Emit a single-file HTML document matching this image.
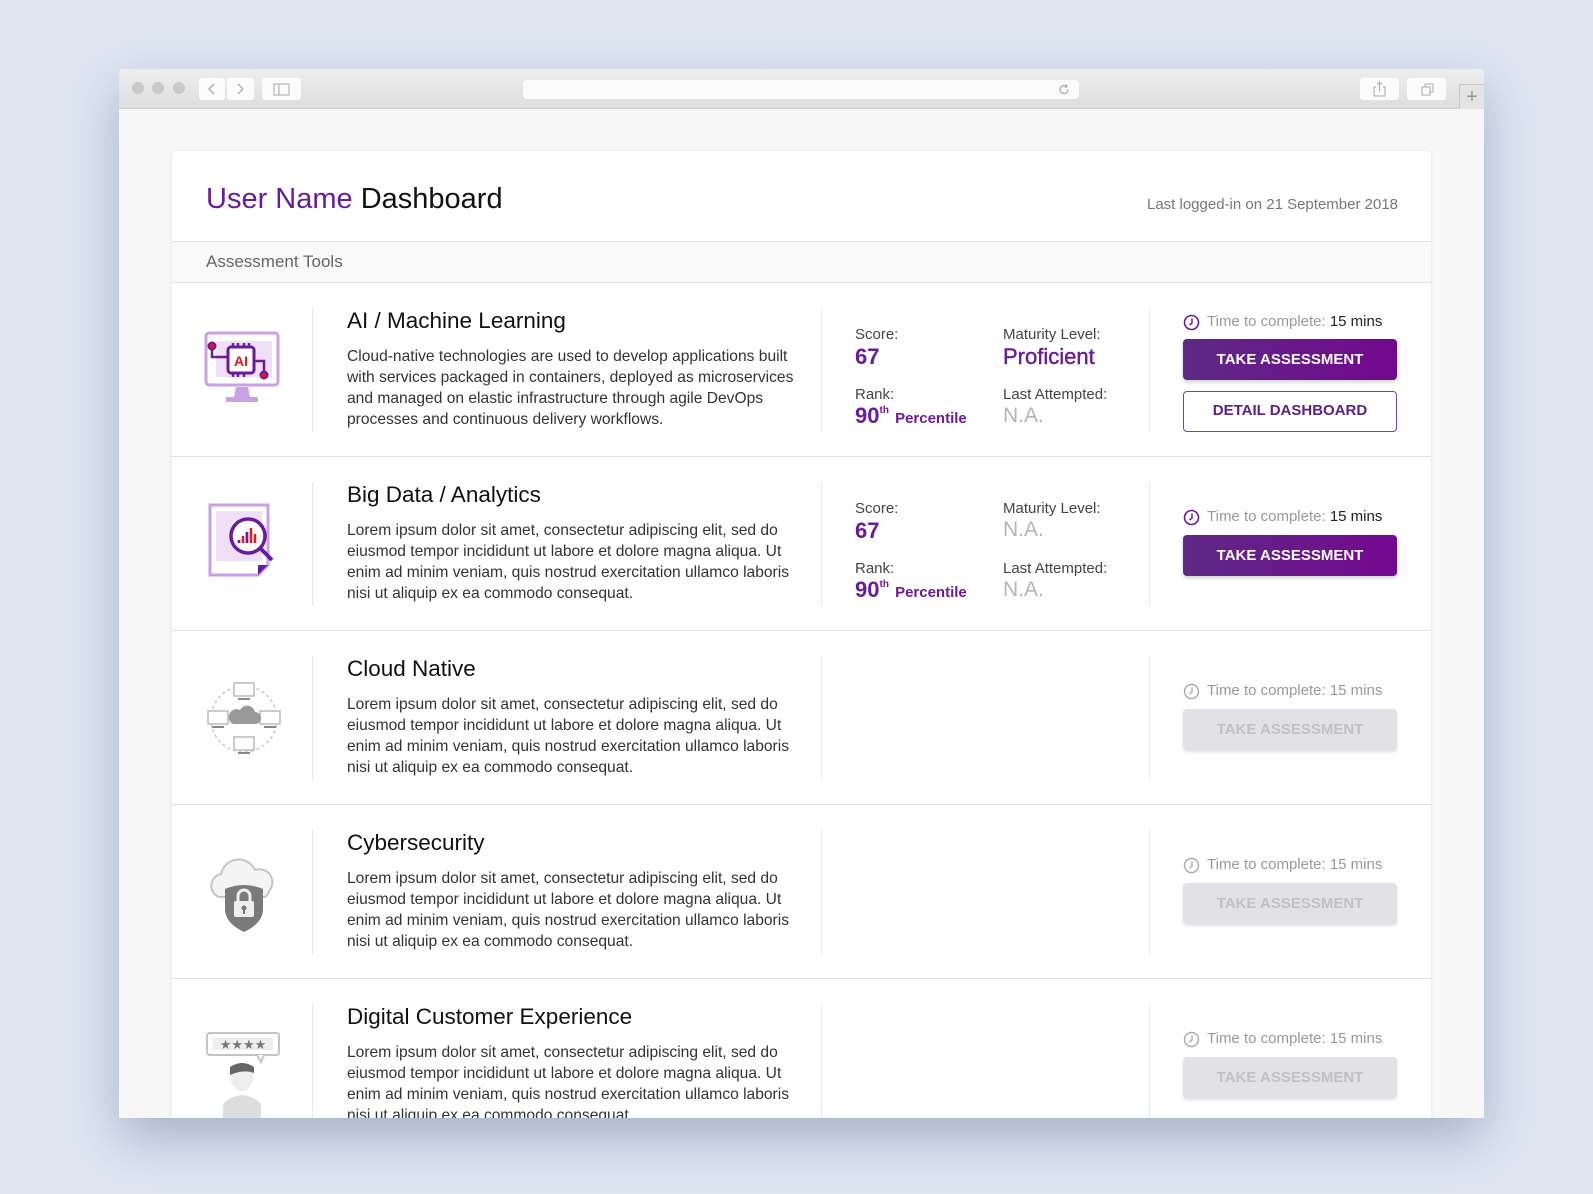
<!DOCTYPE html>
<html><head><meta charset="utf-8"><style>
*{margin:0;padding:0;box-sizing:border-box}
body{width:1593px;height:1194px;background:#dfe6f2;position:relative;overflow:hidden;font-family:"Liberation Sans",sans-serif}
.a{position:absolute}
.win{left:119px;top:69px;width:1365px;height:1049px;background:#f7f7f7;box-shadow:0 20px 50px rgba(60,80,120,.35);overflow:hidden;border-radius:4px 4px 0 0}
.tb{left:0;top:0;width:1365px;height:40px;background:linear-gradient(#eeeeee,#dedede);border-bottom:1px solid #cfcfcf}
.dot{width:12px;height:12px;border-radius:6px;background:#c9c9c9;top:13px}
.bb{background:#fbfbfb;border-radius:3px;height:22px;top:9px}
.card{left:53px;top:82px;width:1259px;height:1100px;background:#fff;border-radius:5px;box-shadow:0 1px 4px rgba(0,0,0,.08)}
.hl{left:0;width:1259px;height:1px;background:#e3e3e6}
.vl{width:1px;height:124px;background:#e6e6e6}
.t{font-size:22.5px;color:#111;white-space:nowrap}
.d{font-size:15.6px;line-height:21px;color:#333;white-space:nowrap}
.lab{font-size:15px;color:#444;white-space:nowrap}
.val{font-size:22px;color:#6a1b9a;white-space:nowrap;font-weight:bold}
.na{font-size:21px;color:#b5b5b8;white-space:nowrap}
.tm{font-size:15px;color:#999;white-space:nowrap}
.tm b{font-weight:normal;color:#222}
.btn{width:214px;height:41px;border-radius:4px;font-size:15px;font-weight:bold;text-align:center;line-height:41px;white-space:nowrap}
.p{background:linear-gradient(90deg,#5e2a86,#73078e);color:#fff;box-shadow:0 2px 4px rgba(0,0,0,.2)}
.o{border:1.5px solid #7b3fa0;color:#5b1f85;line-height:38px}
.g{background:#e2e2e6;color:#c0c0c6;box-shadow:0 2px 3px rgba(0,0,0,.12)}
</style></head><body>
<div class="a win">
 <div class="a tb">
  <div class="a dot" style="left:13px"></div><div class="a dot" style="left:33px"></div><div class="a dot" style="left:54px"></div>
  <div class="a bb" style="left:80px;width:26px"><svg width="26" height="22"><path d="M15 6l-5 5 5 5" stroke="#aaa" fill="none" stroke-width="1.3"/></svg></div>
  <div class="a bb" style="left:108px;width:27px"><svg width="27" height="22"><path d="M11 6l5 5-5 5" stroke="#aaa" fill="none" stroke-width="1.3"/></svg></div>
  <div class="a bb" style="left:143px;width:39px"><svg width="39" height="22"><rect x="12" y="6" width="15" height="11" stroke="#aaa" fill="none"/><line x1="17" y1="6" x2="17" y2="17" stroke="#aaa"/></svg></div>
  <div class="a bb" style="left:404px;width:556px;top:11px;height:19px;border-radius:4px"><svg class="a" style="right:8px;top:3px" width="13" height="13"><path d="M10 6.5a4 4 0 1 1-1.5-3.1" stroke="#999" fill="none"/><path d="M8 1.5l1 2.2-2.3.6" stroke="#999" fill="none"/></svg></div>
  <div class="a bb" style="left:1241px;width:39px"><svg width="39" height="22"><path d="M16 9h-2v9h11v-9h-2M19.5 13V4M17 6.5l2.5-2.5 2.5 2.5" stroke="#aaa" fill="none"/></svg></div>
  <div class="a bb" style="left:1288px;width:39px"><svg width="39" height="22"><rect x="15" y="9" width="8" height="8" stroke="#aaa" fill="none"/><path d="M18 9V6h8v8h-3" stroke="#aaa" fill="none"/></svg></div>
  <div class="a" style="left:1340px;top:15px;width:25px;height:25px;border-left:1px solid #c8c8c8;border-top:1px solid #c8c8c8;background:#e4e4e4;color:#999;font-size:20px;text-align:center;line-height:24px">+</div>
 </div>
 <div class="a card">
  <div class="a" style="left:34px;top:32px;font-size:29px;white-space:nowrap;color:#111"><span style="color:#6a1b9a">User Name</span> Dashboard</div>
  <div class="a" style="right:33px;top:45px;font-size:15px;color:#777;white-space:nowrap">Last logged-in on 21 September 2018</div>
  <div class="a hl" style="top:90px"></div>
  <div class="a" style="left:0;top:91px;width:1259px;height:40px;background:#f9f9f9"></div>
  <div class="a" style="left:34px;top:101px;font-size:17px;color:#666">Assessment Tools</div>
  <div class="a hl" style="top:131px"></div>
  <div class="a hl" style="top:305px"></div>
  <div class="a hl" style="top:479px"></div>
  <div class="a hl" style="top:653px"></div>
  <div class="a hl" style="top:827px"></div>

  <!-- Row 1 -->
  <div class="a vl" style="left:140px;top:157px"></div><div class="a vl" style="left:649px;top:157px"></div><div class="a vl" style="left:977px;top:157px"></div>
  <svg class="a" style="left:32px;top:178px" width="78" height="80"><rect x="2" y="4" width="72" height="52" rx="3" fill="#fff" stroke="#c9a1e6" stroke-width="3"/><rect x="12" y="12" width="56" height="36" fill="#efe0f8"/><path d="M32 58h12l2 10h-16z" fill="#c9a1e6"/><rect x="22" y="68" width="32" height="5" fill="#c9a1e6"/><rect x="24" y="18" width="26" height="26" rx="3" fill="#fff" stroke="#6a1b9a" stroke-width="3"/><text x="37" y="37" font-size="14" font-weight="bold" fill="#e0191f" text-anchor="middle" font-family="Liberation Sans">AI</text><path d="M8 18v10h16M50 32h10v12M29 14v4M34 14v4M40 14v4M45 14v4M29 44v4M34 44v4M40 44v4" stroke="#6a1b9a" stroke-width="2.5" fill="none"/><circle cx="8" cy="17" r="3.5" fill="#e0191f" stroke="#6a1b9a" stroke-width="2"/><circle cx="60" cy="46" r="3.5" fill="#e0191f" stroke="#6a1b9a" stroke-width="2"/></svg>
  <div class="a t" style="left:175px;top:157px">AI / Machine Learning</div>
  <div class="a d" style="left:175px;top:195px">Cloud-native technologies are used to develop applications built<br>with services packaged in containers, deployed as microservices<br>and managed on elastic infrastructure through agile DevOps<br>processes and continuous delivery workflows.</div>
  <div class="a lab" style="left:683px;top:175px">Score:</div>
  <div class="a val" style="left:683px;top:193px">67</div>
  <div class="a lab" style="left:831px;top:175px">Maturity Level:</div>
  <div class="a val" style="left:831px;top:193px;font-weight:normal;-webkit-text-stroke:.4px #6a1b9a">Proficient</div>
  <div class="a lab" style="left:683px;top:235px">Rank:</div>
  <div class="a val" style="left:683px;top:252px">90<sup style="font-size:10px;vertical-align:10px">th</sup> <span style="font-size:15px">Percentile</span></div>
  <div class="a lab" style="left:831px;top:235px">Last Attempted:</div>
  <div class="a na" style="left:831px;top:253px">N.A.</div>
  <svg class="a" style="left:1011px;top:163px" width="17" height="17"><circle cx="8.5" cy="8.5" r="7" stroke="#6a1b9a" stroke-width="1.6" fill="none"/><path d="M9 4.5v4.5l-2.5 2" stroke="#6a1b9a" stroke-width="1.5" fill="none"/></svg>
  <div class="a tm" style="left:1035px;top:162px">Time to complete: <b>15 mins</b></div>
  <div class="a btn p" style="left:1011px;top:188px">TAKE ASSESSMENT</div>
  <div class="a btn o" style="left:1011px;top:240px">DETAIL DASHBOARD</div>

  <!-- Row 2 -->
  <div class="a vl" style="left:140px;top:331px"></div><div class="a vl" style="left:649px;top:331px"></div><div class="a vl" style="left:977px;top:331px"></div>
  <svg class="a" style="left:36px;top:352px" width="72" height="78"><path d="M2 2h58v60l-10 10H2z" fill="#fff" stroke="#c9a1e6" stroke-width="3"/><rect x="8" y="8" width="46" height="50" fill="#efe0f8"/><path d="M50 72l10-10h-10z" fill="#6a1b9a"/><circle cx="40" cy="33" r="17" fill="#fff" stroke="#6a1b9a" stroke-width="3.5"/><path d="M52 45l12 12" stroke="#6a1b9a" stroke-width="4"/><path d="M31 40v-3M35 40v-7M39 40v-11M43 40v-15M47 40v-9" stroke="#e0191f" stroke-width="2.5"/><path d="M31 40v-3M39 40v-11" stroke="#6a1b9a" stroke-width="2.5"/></svg>
  <div class="a t" style="left:175px;top:331px">Big Data / Analytics</div>
  <div class="a d" style="left:175px;top:369px">Lorem ipsum dolor sit amet, consectetur adipiscing elit, sed do<br>eiusmod tempor incididunt ut labore et dolore magna aliqua. Ut<br>enim ad minim veniam, quis nostrud exercitation ullamco laboris<br>nisi ut aliquip ex ea commodo consequat.</div>
  <div class="a lab" style="left:683px;top:349px">Score:</div>
  <div class="a val" style="left:683px;top:367px">67</div>
  <div class="a lab" style="left:831px;top:349px">Maturity Level:</div>
  <div class="a na" style="left:831px;top:367px">N.A.</div>
  <div class="a lab" style="left:683px;top:409px">Rank:</div>
  <div class="a val" style="left:683px;top:426px">90<sup style="font-size:10px;vertical-align:10px">th</sup> <span style="font-size:15px">Percentile</span></div>
  <div class="a lab" style="left:831px;top:409px">Last Attempted:</div>
  <div class="a na" style="left:831px;top:427px">N.A.</div>
  <svg class="a" style="left:1011px;top:358px" width="17" height="17"><circle cx="8.5" cy="8.5" r="7" stroke="#6a1b9a" stroke-width="1.6" fill="none"/><path d="M9 4.5v4.5l-2.5 2" stroke="#6a1b9a" stroke-width="1.5" fill="none"/></svg>
  <div class="a tm" style="left:1035px;top:357px">Time to complete: <b>15 mins</b></div>
  <div class="a btn p" style="left:1011px;top:384px">TAKE ASSESSMENT</div>

  <!-- Row 3 -->
  <div class="a vl" style="left:140px;top:505px"></div><div class="a vl" style="left:649px;top:505px"></div><div class="a vl" style="left:977px;top:505px"></div>
  <svg class="a" style="left:34px;top:530px" width="76" height="76"><circle cx="38" cy="38" r="33" stroke="#c8c8c8" stroke-width="1.5" stroke-dasharray="3 3" fill="none"/><g fill="#fff" stroke="#bbb" stroke-width="1.5"><rect x="28" y="2" width="20" height="13"/><rect x="2" y="30" width="20" height="13"/><rect x="54" y="30" width="20" height="13"/><rect x="28" y="56" width="20" height="13"/></g><g fill="#888"><rect x="32" y="17" width="12" height="2"/><rect x="6" y="45" width="12" height="2"/><rect x="58" y="45" width="12" height="2"/><rect x="32" y="71" width="12" height="2"/></g><path d="M27 43h22a6 6 0 0 0 0-12 8 8 0 0 0-15-2 7 7 0 0 0-7 14z" fill="#999"/></svg>
  <div class="a t" style="left:175px;top:505px">Cloud Native</div>
  <div class="a d" style="left:175px;top:543px">Lorem ipsum dolor sit amet, consectetur adipiscing elit, sed do<br>eiusmod tempor incididunt ut labore et dolore magna aliqua. Ut<br>enim ad minim veniam, quis nostrud exercitation ullamco laboris<br>nisi ut aliquip ex ea commodo consequat.</div>
  <svg class="a" style="left:1011px;top:532px" width="17" height="17"><circle cx="8.5" cy="8.5" r="7" stroke="#aaa" stroke-width="1.4" fill="none"/><path d="M9 4.5v4.5l-2.5 2" stroke="#aaa" stroke-width="1.4" fill="none"/></svg>
  <div class="a tm" style="left:1035px;top:531px">Time to complete: 15 mins</div>
  <div class="a btn g" style="left:1011px;top:558px">TAKE ASSESSMENT</div>

  <!-- Row 4 -->
  <div class="a vl" style="left:140px;top:679px"></div><div class="a vl" style="left:649px;top:679px"></div><div class="a vl" style="left:977px;top:679px"></div>
  <svg class="a" style="left:33px;top:706px" width="78" height="78"><path d="M14 40a12 12 0 0 1 2-23 18 18 0 0 1 34-4 13 13 0 0 1 14 21 10 10 0 0 1-4 6z" fill="#f4f4f4" stroke="#c4c4c4" stroke-width="2"/><path d="M20 32q19-8 38 0v20q0 14-19 23-19-9-19-23z" fill="#7a7a7a"/><rect x="29" y="44" width="20" height="16" rx="2" fill="#eee"/><path d="M33 44v-5a6 6 0 0 1 12 0v5" stroke="#eee" stroke-width="3" fill="none"/><circle cx="39" cy="51" r="2.5" fill="#777"/><rect x="38" y="52" width="2" height="5" fill="#777"/></svg>
  <div class="a t" style="left:175px;top:679px">Cybersecurity</div>
  <div class="a d" style="left:175px;top:717px">Lorem ipsum dolor sit amet, consectetur adipiscing elit, sed do<br>eiusmod tempor incididunt ut labore et dolore magna aliqua. Ut<br>enim ad minim veniam, quis nostrud exercitation ullamco laboris<br>nisi ut aliquip ex ea commodo consequat.</div>
  <svg class="a" style="left:1011px;top:706px" width="17" height="17"><circle cx="8.5" cy="8.5" r="7" stroke="#aaa" stroke-width="1.4" fill="none"/><path d="M9 4.5v4.5l-2.5 2" stroke="#aaa" stroke-width="1.4" fill="none"/></svg>
  <div class="a tm" style="left:1035px;top:705px">Time to complete: 15 mins</div>
  <div class="a btn g" style="left:1011px;top:732px">TAKE ASSESSMENT</div>

  <!-- Row 5 -->
  <div class="a vl" style="left:140px;top:853px"></div><div class="a vl" style="left:649px;top:853px"></div><div class="a vl" style="left:977px;top:853px"></div>
  <svg class="a" style="left:33px;top:880px" width="78" height="90"><rect x="2" y="2" width="72" height="22" rx="3" fill="#fff" stroke="#c4c4c4" stroke-width="2"/><rect x="8" y="7" width="60" height="12" fill="#eee"/><text x="38" y="18" font-size="13" fill="#777" text-anchor="middle" font-family="DejaVu Sans">★★★★</text><path d="M52 24l4 7 3-7" fill="#fff" stroke="#c4c4c4" stroke-width="2"/><path d="M26 38q10-8 22-2v14q-4 10-11 10t-11-10z" fill="#eee"/><path d="M25 44v-8q12-8 24 0v6q-10-4-24 2z" fill="#666"/><path d="M18 90v-16q4-8 19-10 15 2 19 10v16z" fill="#ddd"/></svg>
  <div class="a t" style="left:175px;top:853px">Digital Customer Experience</div>
  <div class="a d" style="left:175px;top:891px">Lorem ipsum dolor sit amet, consectetur adipiscing elit, sed do<br>eiusmod tempor incididunt ut labore et dolore magna aliqua. Ut<br>enim ad minim veniam, quis nostrud exercitation ullamco laboris<br>nisi ut aliquip ex ea commodo consequat.</div>
  <svg class="a" style="left:1011px;top:880px" width="17" height="17"><circle cx="8.5" cy="8.5" r="7" stroke="#aaa" stroke-width="1.4" fill="none"/><path d="M9 4.5v4.5l-2.5 2" stroke="#aaa" stroke-width="1.4" fill="none"/></svg>
  <div class="a tm" style="left:1035px;top:879px">Time to complete: 15 mins</div>
  <div class="a btn g" style="left:1011px;top:906px">TAKE ASSESSMENT</div>
 </div>
</div>
</body></html>
